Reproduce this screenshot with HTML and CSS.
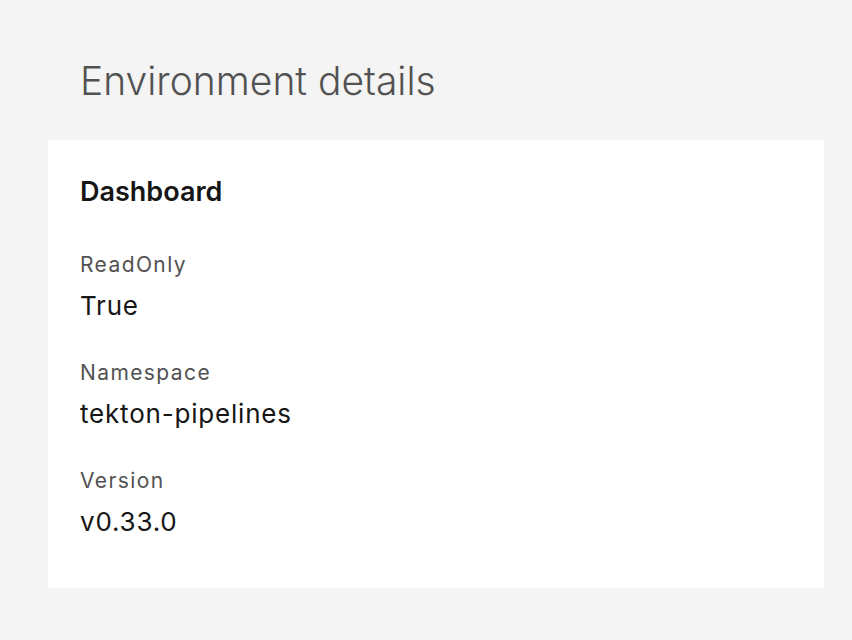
FILE: index.html
```html
<!DOCTYPE html>
<html lang="en">
<head>
<meta charset="utf-8">
<title>Environment details</title>
<link rel="stylesheet" href="styles.css">
</head>
<body>
<main class="page">
  <h1 class="title">Environment details</h1>
  <section class="card">
    <h2 class="card-title">Dashboard</h2>
    <dl class="details">
      <div class="item">
        <dt class="label">ReadOnly</dt>
        <dd class="value">True</dd>
      </div>
      <div class="item">
        <dt class="label">Namespace</dt>
        <dd class="value">tekton-pipelines</dd>
      </div>
      <div class="item">
        <dt class="label">Version</dt>
        <dd class="value">v0.33.0</dd>
      </div>
    </dl>
  </section>
</main>
</body>
</html>
```

FILE: styles.css
```css
html, body {
  margin: 0;
  padding: 0;
  background: #f4f4f4;
}
body {
  font-family: Inter, "Noto Sans", sans-serif;
  color: #161616;
}
.page {
  padding: 55px 28px 0 48px;
}
.title {
  margin: 0 0 33px 32px;
  font-size: 39px;
  font-weight: 300;
  line-height: 52px;
  color: #525252;
}
.card {
  background: #ffffff;
  padding: 36px 32px 36px 32px;
  height: 376px;
}
.card-title {
  margin: 0 0 43px;
  font-size: 27px;
  font-weight: 600;
  line-height: 32px;
}
.details {
  margin: 0;
  display: flex;
  flex-direction: column;
  gap: 37px;
}
.item {
  display: flex;
  flex-direction: column;
  gap: 11px;
}
.label {
  font-size: 21px;
  line-height: 28px;
  letter-spacing: 1.4px;
  color: #525252;
}
.value {
  margin: 0;
  font-size: 26px;
  line-height: 32px;
  letter-spacing: 0.8px;
}
```
